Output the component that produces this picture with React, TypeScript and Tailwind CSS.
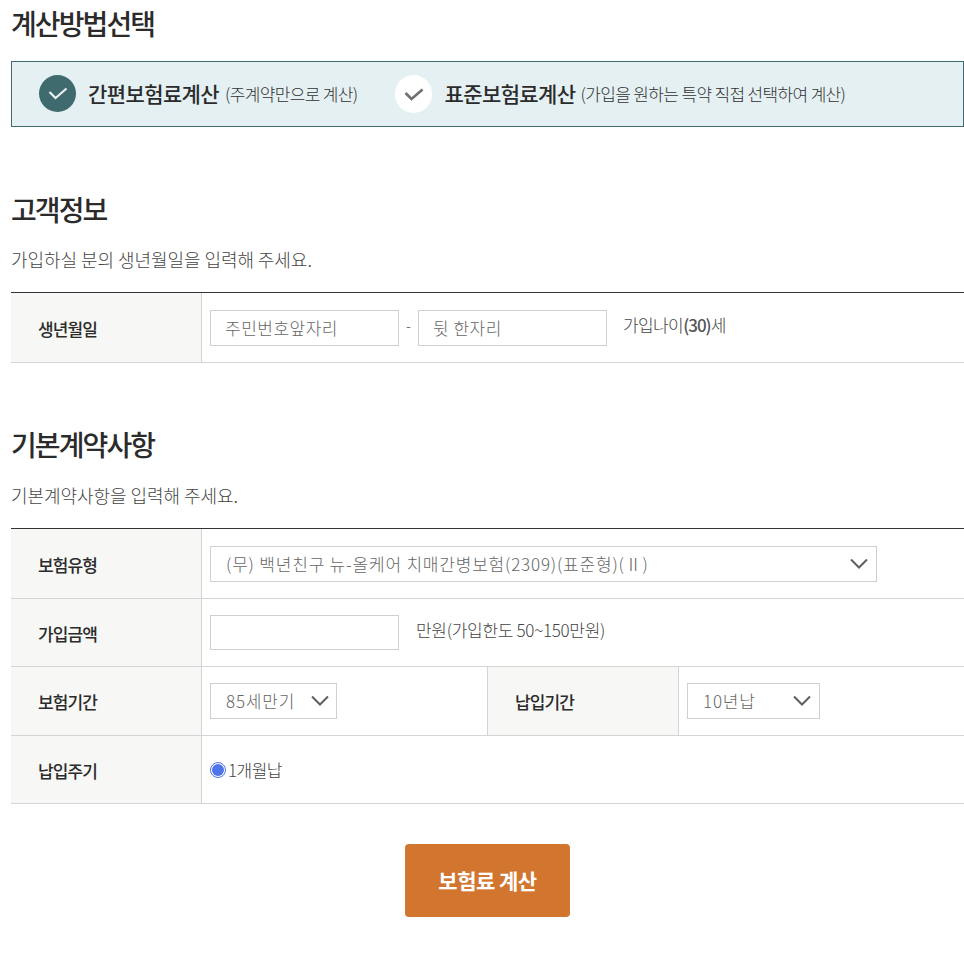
const font = { fontFamily: '"Noto Sans CJK KR", "Noto Sans", sans-serif' };

function Chevron() {
  return (
    <svg width="18" height="11" viewBox="0 0 18 11" fill="none" className="shrink-0">
      <path d="M1 1.5 L9 9.5 L17 1.5" stroke="#5f5f5f" strokeWidth="2" />
    </svg>
  );
}

function Check({ color, width }: { color: string; width: number }) {
  return (
    <svg width="20" height="13" viewBox="0 0 20 13" fill="none">
      <path d="M1.5 5 L7.5 11 L18.5 1.5" stroke={color} strokeWidth={width} />
    </svg>
  );
}

function Heading({ children }: { children: string }) {
  return <h2 className="h-[36px] text-[28px] leading-[36px] font-medium tracking-[-1.9px] text-[#2b2b2b]">{children}</h2>;
}

function Desc({ children, mt }: { children: string; mt: string }) {
  return <p className={`${mt} h-[24px] text-[18px] leading-[24px] font-light tracking-[-0.05px] text-[#444444]`}>{children}</p>;
}

function Label({ children }: { children: string }) {
  return (
    <div className="w-[191px] shrink-0 self-stretch flex items-center pl-[27px] pt-[2px] bg-[#f7f7f5] border-r border-[#d5d5d5] text-[17px] font-medium tracking-[-0.85px] text-[#2b2b2b]">
      {children}
    </div>
  );
}

function Box({ w, h = "h-[36px]", children, justify = "justify-between" }: { w: string; h?: string; children?: React.ReactNode; justify?: string }) {
  return (
    <div className={`${w} ${h} shrink-0 flex items-center ${justify} border border-[#d0d0d0] bg-white pl-[14px] text-[17px] font-light text-[#666666] tracking-[0.5px]`}>
      {children}
    </div>
  );
}

function Select({ w, value, pr }: { w: string; value: string; pr: string }) {
  return (
    <Box w={w}>
      <span className="pl-[1px] tracking-[0.8px]">{value}</span>
      <span className={pr}><Chevron /></span>
    </Box>
  );
}

export default function App() {
  return (
    <div style={font} className="w-[964px] h-[954px] bg-white pl-[11px] overflow-hidden">
      <div className="pt-[5px]">
        <Heading>계산방법선택</Heading>
      </div>
      <div className="mt-[20px] h-[66px] w-[953px] flex items-center border border-[#3d6b6e] bg-[#e4f0f2] pl-[27px]">
        <div className="w-[37px] h-[37px] -mt-[1px] rounded-full bg-[#3f6b6e] flex items-center justify-center shrink-0">
          <Check color="#e8f0f1" width={2.2} />
        </div>
        <span className="ml-[12px] text-[21px] font-medium tracking-[-0.6px] text-[#2b2b2b]">간편보험료계산</span>
        <span className="ml-[6px] text-[17px] font-light tracking-[-0.65px] text-[#333333]">(주계약만으로 계산)</span>
        <div className="ml-[38px] w-[37px] h-[38px] rounded-full bg-white flex items-center justify-center shrink-0">
          <Check color="#707070" width={2.6} />
        </div>
        <span className="ml-[12px] text-[21px] font-medium tracking-[-0.6px] text-[#2b2b2b]">표준보험료계산</span>
        <span className="ml-[5px] text-[17px] font-light tracking-[-0.65px] text-[#333333]">(가입을 원하는 특약 직접 선택하여 계산)</span>
      </div>

      <div className="mt-[64px]">
        <Heading>고객정보</Heading>
      </div>
      <Desc mt="mt-[20px]">가입하실 분의 생년월일을 입력해 주세요.</Desc>
      <div className="mt-[21px] border-t border-[#333333]">
        <div className="h-[70px] flex items-center border-b border-[#d5d5d5]">
          <Label>생년월일</Label>
          <div className="flex items-center pl-[8px]">
            <Box w="w-[189px]" justify="justify-start">주민번호앞자리</Box>
            <span className="w-[19px] -mt-[4px] text-center text-[14px] text-[#777777]">-</span>
            <Box w="w-[189px]" justify="justify-start">뒷 한자리</Box>
            <span className="ml-[16px] text-[17px] font-light tracking-[-0.6px] text-[#444444] -mt-[5px]">
              가입나이<span className="font-medium text-[#555555] tracking-[-1px]">(30)</span>세
            </span>
          </div>
        </div>
      </div>

      <div className="mt-[63px]">
        <Heading>기본계약사항</Heading>
      </div>
      <Desc mt="mt-[21px]">기본계약사항을 입력해 주세요.</Desc>
      <div className="mt-[21px] border-t border-[#333333]">
        <div className="h-[70px] flex items-center border-b border-[#d5d5d5]">
          <Label>보험유형</Label>
          <div className="pl-[8px]">
            <Select w="w-[667px]" value="(무) 백년친구 뉴-올케어 치매간병보험(2309)(표준형)(Ⅱ)" pr="pr-[8px]" />
          </div>
        </div>
        <div className="h-[68px] flex items-center border-b border-[#d5d5d5]">
          <Label>가입금액</Label>
          <div className="flex items-center pl-[8px]">
            <Box w="w-[189px]" h="h-[35px]" />
            <span className="ml-[17px] text-[17px] font-light tracking-[-0.3px] text-[#444444] -mt-[5px]">만원(가입한도 50~150만원)</span>
          </div>
        </div>
        <div className="h-[69px] flex items-center border-b border-[#d5d5d5]">
          <Label>보험기간</Label>
          <div className="w-[285px] shrink-0 pl-[8px] -mt-[1px]">
            <Select w="w-[127px]" value="85세만기" pr="pr-[7px]" />
          </div>
          <div className="self-stretch flex border-l border-[#d5d5d5]">
            <Label>납입기간</Label>
          </div>
          <div className="pl-[8px] -mt-[1px]">
            <Select w="w-[133px]" value="10년납" pr="pr-[8px]" />
          </div>
        </div>
        <div className="h-[68px] flex items-center border-b border-[#d5d5d5]">
          <Label>납입주기</Label>
          <div className="flex items-center pl-[8px]">
            <span className="w-[16px] h-[16px] rounded-full border border-[#4d74e8] bg-white flex items-center justify-center">
              <span className="w-[12px] h-[12px] rounded-full bg-[#4d74e8]" />
            </span>
            <span className="ml-[2px] text-[17px] font-light tracking-[-0.5px] text-[#444444]">1개월납</span>
          </div>
        </div>
      </div>

      <div className="mt-[40px] ml-[394px] w-[165px] h-[73px] rounded-[4px] bg-[#d2752f] flex items-center justify-center text-[21px] font-bold tracking-[-0.5px] text-white">
        보험료 계산
      </div>
    </div>
  );
}
